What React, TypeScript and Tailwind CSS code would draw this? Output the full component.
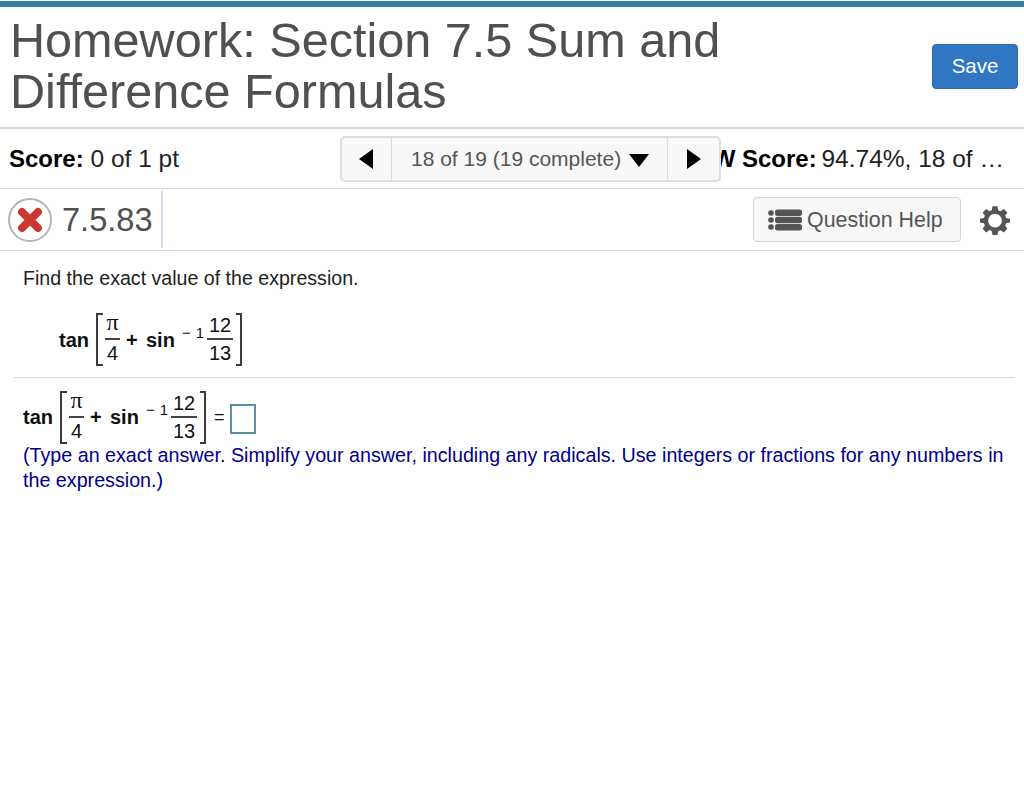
const font = "font-['Liberation_Sans',Arial,sans-serif]";

const Bracket = ({ side }: { side: 'l' | 'r' }) => (
  <div
    className={
      side === 'l'
        ? 'w-[7px] h-[53px] border-l-2 border-t-2 border-b-2 border-[#3a3a3a]'
        : 'w-[6px] h-[53px] border-r-2 border-t-2 border-b-2 border-[#3a3a3a]'
    }
  />
);

const Fraction = ({ top, bottom, w, serif }: { top: string; bottom: string; w: string; serif?: boolean }) => (
  <div className={`flex flex-col items-center ${w} text-[20px] leading-[22px] text-[#111]`}>
    <span
      className={
        serif
          ? "h-[25px] text-[24px] leading-[18px] font-['Liberation_Serif',serif]"
          : 'h-[25px] pt-[1px]'
      }
    >
      {top}
    </span>
    <div className="h-[2px] w-full bg-[#444]" />
    <span className="h-[26px] pt-[2px]">{bottom}</span>
  </div>
);

const Expression = () => (
  <div className="flex items-center text-[20px] text-[#111]">
    <span className="w-[37px] font-bold">tan</span>
    <Bracket side="l" />
    <div className="ml-[2px]">
      <Fraction top="π" bottom="4" w="w-[15px]" serif />
    </div>
    <span className="ml-[6px] w-[20px] font-bold">+</span>
    <span className="w-[36px] font-bold">sin</span>
    <span className="w-[25px] mb-[14px] text-[15px] leading-[18px] whitespace-nowrap">
      <span className="mr-[5px]">−</span>1
    </span>
    <Fraction top="12" bottom="13" w="w-[26px]" />
    <div className="ml-[3px]">
      <Bracket side="r" />
    </div>
  </div>
);

const App = () => {
  return (
    <div className={`w-[1024px] h-[807px] bg-white overflow-hidden ${font}`}>
      <div className="mt-px h-[6px] bg-[#3a7da3]" />
      <div className="h-[122px] border-b-2 border-[#d3d8e6] flex justify-between pl-[10px] pr-[6px]">
        <h1 className="w-[800px] pt-[8px] text-[48.6px] leading-[51px] text-[#505050]">
          Homework: Section 7.5 Sum and Difference Formulas
        </h1>
        <button className="mt-[37px] w-[86px] h-[45px] rounded-[4px] bg-[#3176c2] border border-[#2e6da4] text-white text-[20.5px]">
          Save
        </button>
      </div>

      <div className="h-[60px] border-b border-[#ccd5e8] flex items-center text-[24.5px] text-[#222]">
        <div className="w-[340px] shrink-0 pl-[9px] pt-[1px]">
          <b className="text-[24px] text-black">Score:</b> 0 of 1 pt
        </div>
        <div className="relative z-10 flex w-[381px] h-[46px] shrink-0 rounded-[5px] border-2 border-[#dedede] bg-[#f8f8f8] text-[#555]">
          <div className="w-[50px] shrink-0 border-r border-[#dcdcdc] flex items-center justify-center">
            <svg className="mr-[1px] mt-[1px]" width="16" height="22" viewBox="0 0 16 22"><path d="M15 1v20L1 11z" fill="#000" /></svg>
          </div>
          <div className="flex-1 flex items-center pl-[19px] text-[21px] whitespace-nowrap">
            18 of 19 (19 complete)
            <svg className="ml-[8px] mt-[2px]" width="20" height="14" viewBox="0 0 20 14"><path d="M0 1h20L10 14z" fill="#000" /></svg>
          </div>
          <div className="w-[52px] shrink-0 border-l border-[#dcdcdc] flex items-center justify-center">
            <svg className="ml-[1px] mt-[1px]" width="16" height="22" viewBox="0 0 16 22"><path d="M1 1v20l14-10z" fill="#000" /></svg>
          </div>
        </div>
        <div className="flex-1 flex justify-end overflow-hidden whitespace-nowrap pr-[20px] pt-[1px]">
          <span className="shrink-0">
            <b className="-mr-[2px] text-[24px] text-black">W Score:</b> 94.74%, 18 of …
          </span>
        </div>
      </div>

      <div className="h-[62px] border-b border-[#ccd5e8] flex items-center">
        <div className="ml-[8px] w-[44px] h-[44px] rounded-full border-2 border-[#b4b4b4] flex items-center justify-center">
          <svg width="30" height="30" viewBox="0 0 30 30">
            <path d="M7 7l16 16M23 7L7 23" stroke="#cf3632" strokeWidth="8" strokeLinecap="round" />
          </svg>
        </div>
        <span className="ml-[10px] pt-[2px] text-[32.6px] text-[#505050]">7.5.83</span>
        <div className="ml-[8px] w-[2px] h-[57px] bg-[#d3d8e6]" />
        <button className="ml-auto flex items-center w-[208px] h-[45px] rounded-[4px] border border-[#d4d4d4] bg-[#f7f7f7] text-[21.4px] text-[#555] pl-[14px] pt-[1px] whitespace-nowrap">
          <svg className="mr-[5px] -mt-[1px]" width="34" height="24" viewBox="0 0 34 24" fill="#555">
            <circle cx="3" cy="5" r="2.8" />
            <circle cx="3" cy="12" r="2.8" />
            <circle cx="3" cy="19" r="2.8" />
            <rect x="7" y="1.5" width="27" height="6.5" rx="2.5" />
            <rect x="7" y="8.8" width="27" height="6.5" rx="2.5" />
            <rect x="7" y="16" width="27" height="6.5" rx="2.5" />
          </svg>
          Question Help
        </button>
        <svg className="ml-[19px] mr-[14px]" width="30" height="30" viewBox="0 0 24 24" fill="#555">
          <path
            fillRule="evenodd"
            d="M10 1h4l.6 3.1 1.8.8L19 3.1 21.9 6l-1.8 2.6.8 1.8L24 11v3l-3.1.6-.8 1.8 1.8 2.6-2.9 2.9-2.6-1.8-1.8.8L14 23.9h-4l-.6-3.1-1.8-.8L5 21.9 2.1 19l1.8-2.6-.8-1.8L0 14v-3l3.1-.6.8-1.8L2.1 6 5 3.1l2.6 1.8 1.8-.8L10 1zM12 7a5.500 5.500 0 1 0 0 11 5.500 5.500 0 0 0 0-11z"
          />
        </svg>
      </div>

      <div className="pl-[14px] pr-[9px]">
        <p className="pl-[9px] pt-[15px] text-[19.6px] leading-[24px] text-[#222]">
          Find the exact value of the expression.
        </p>
        <div className="pl-[45px] pt-[23px] h-[87px]">
          <Expression />
        </div>
        <div className="h-px bg-[#d4d4d4]" />
        <div className="pl-[9px] pt-[13px] h-[65px] flex items-center">
          <Expression />
          <span className="ml-[8px] w-[16px] text-[18px] text-[#111]">=</span>
          <div className="mt-[3px] w-[26px] h-[30px] border-2 border-[#5a8fa8]" />
        </div>
        <p className="pl-[9px] text-[19.7px] leading-[25px] text-[#00008b]">
          (Type an exact answer. Simplify your answer, including any radicals. Use integers or fractions for any numbers in the expression.)
        </p>
      </div>
    </div>
  );
};

export default App;
